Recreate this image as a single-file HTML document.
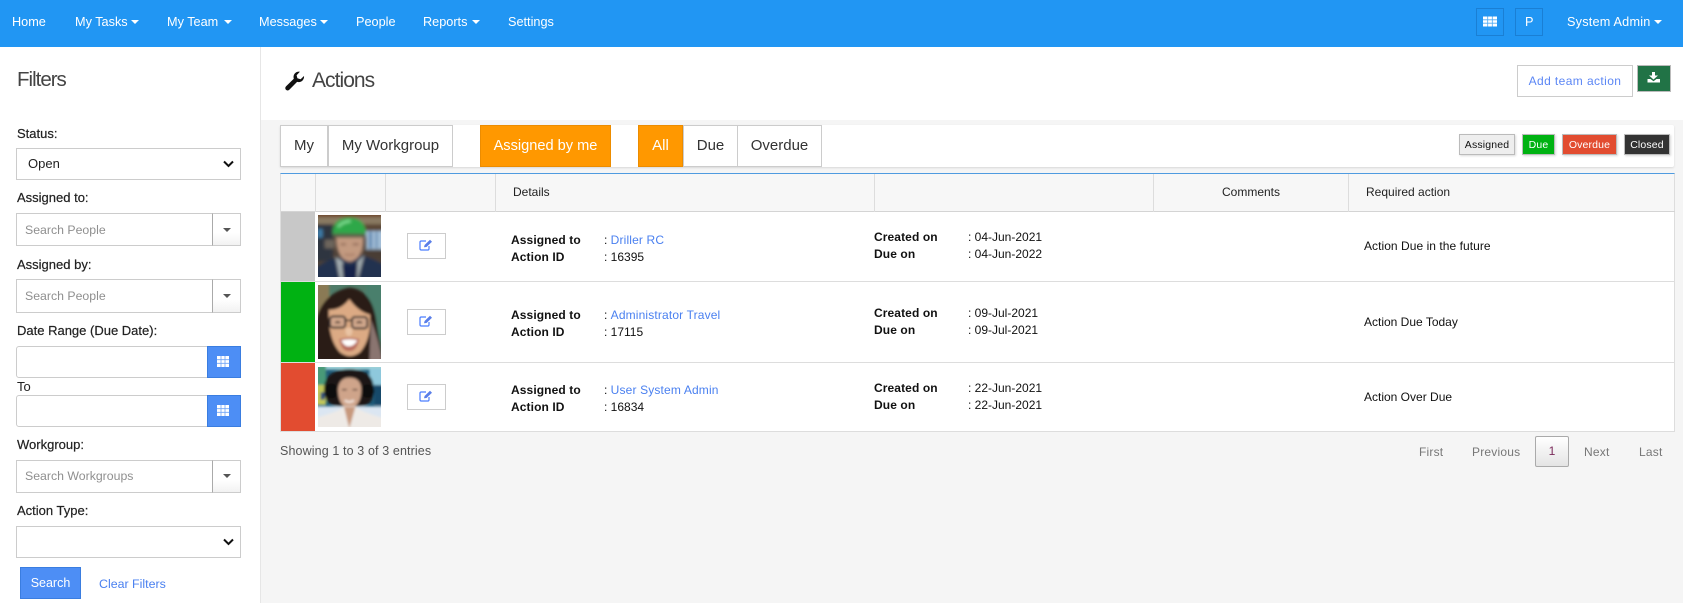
<!DOCTYPE html>
<html><head><meta charset="utf-8"><title>Actions</title>
<style>
*{box-sizing:border-box}
html,body{margin:0;padding:0;width:1683px;height:603px;overflow:hidden;background:#f5f5f5;font-family:"Liberation Sans",sans-serif;color:#222}
.a{position:absolute}
.t{position:absolute;white-space:nowrap;line-height:20px;height:20px}
.nav{font-size:12.7px;color:#fff}
.car{position:absolute;width:0;height:0;border-left:4px solid transparent;border-right:4px solid transparent;border-top:4px solid #fff}
.lab{font-size:13px;color:#222;-webkit-text-stroke:.2px #222;left:17px}
.box{position:absolute;left:16px;width:225px;background:#fff;border:1px solid #ccc}
.ph{font-size:12.3px;color:#8f8f8f;left:25px}
.split{position:absolute;left:212px;width:29px;background:linear-gradient(#fff 60%,#f2f2f2);border:1px solid #ccc;border-left:1px solid #aaa}
.dcar{position:absolute;left:223px;width:0;height:0;border-left:4px solid transparent;border-right:4px solid transparent;border-top:4px solid #555}
.tab{position:absolute;top:125px;height:42px;background:#fff;border:1px solid #ccc;font-size:15px;color:#333;text-align:center;line-height:40px}
.or{background:#ff9800;border:1px solid #ec8c00;color:#fff}
.leg{position:absolute;top:134px;height:21px;font-size:10.5px;text-align:center;line-height:20px;border:1px solid #bbb;box-shadow:1px 1px 2px rgba(0,0,0,.15);color:#fff;letter-spacing:.15px}
.hd{font-size:12px;color:#222}
.sep{position:absolute;top:174px;height:38px;width:1px;background:#ddd}
.rowline{position:absolute;left:281px;width:1394px;height:1px;background:#ddd}
.bt{font-size:12px;font-weight:bold;color:#111;letter-spacing:.1px}
.v{font-size:12px;color:#111}
.lnk{color:#4a80f0;letter-spacing:.15px}
.ed{position:absolute;left:407px;width:39px;height:26px;border:1px solid #ccc;background:#fff}
.pg{font-size:12px;color:#777;letter-spacing:.2px}
</style></head><body>

<div class="a" style="left:0;top:0;width:1683px;height:47px;background:#2196f3"></div>
<div class="t nav" style="left:12px;top:12px">Home</div>
<div class="t nav" style="left:75px;top:12px">My Tasks</div><div class="car" style="left:131px;top:20px"></div>
<div class="t nav" style="left:167px;top:12px">My Team</div><div class="car" style="left:224px;top:20px"></div>
<div class="t nav" style="left:259px;top:12px">Messages</div><div class="car" style="left:320px;top:20px"></div>
<div class="t nav" style="left:356px;top:12px">People</div>
<div class="t nav" style="left:423px;top:12px">Reports</div><div class="car" style="left:472px;top:20px"></div>
<div class="t nav" style="left:508px;top:12px">Settings</div>

<div class="a" style="left:1476px;top:8px;width:28px;height:28px;border:1px solid #1a7fd4"></div>
<svg class="a" style="left:1483px;top:16px" width="14" height="11" viewBox="0 0 14 11"><rect width="14" height="10" y=".5" fill="#fff"/><path d="M4.700 0V11M9.300 0V11M0 3.800H14M0 7.200H14" stroke="#2196f3" stroke-width=".8" opacity=".8"/></svg>
<div class="a" style="left:1515px;top:8px;width:28px;height:28px;border:1px solid #1a7fd4"></div>
<div class="t nav" style="left:1525px;top:12px">P</div>
<div class="t nav" style="left:1567px;top:12px;letter-spacing:.2px">System Admin</div><div class="car" style="left:1654px;top:20px"></div>

<div class="a" style="left:0;top:47px;width:260px;height:556px;background:#fff"></div>
<div class="a" style="left:260px;top:47px;width:1px;height:556px;background:#e6e6e6"></div>
<div class="a" style="left:261px;top:47px;width:1422px;height:73px;background:#fff"></div>

<div class="t" style="left:17px;top:66px;height:28px;line-height:28px;font-size:20.5px;color:#444;letter-spacing:-1px">Filters</div>

<div class="t lab" style="top:124px">Status:</div>
<div class="box" style="top:148px;height:32px"></div>
<div class="t" style="left:28px;top:154px;font-size:13px;color:#222">Open</div>
<svg class="a" style="left:223px;top:160px" width="11" height="8"><path d="M1 1.500l4.500 4.500 4.500-4.500" fill="none" stroke="#111" stroke-width="2"/></svg>

<div class="t lab" style="top:188px">Assigned to:</div>
<div class="box" style="top:213px;height:33px;width:197px"></div>
<div class="split" style="top:213px;height:33px"></div><div class="dcar" style="top:228px"></div>
<div class="t ph" style="top:220px">Search People</div>

<div class="t lab" style="top:255px">Assigned by:</div>
<div class="box" style="top:279px;height:34px;width:197px"></div>
<div class="split" style="top:279px;height:34px"></div><div class="dcar" style="top:294px"></div>
<div class="t ph" style="top:286px">Search People</div>

<div class="t lab" style="top:321px">Date Range (Due Date):</div>
<div class="box" style="top:346px;height:32px;width:192px;border-radius:3px 0 0 3px"></div>
<div class="a" style="left:207px;top:346px;width:34px;height:32px;background:#4d8ef5;border:1px solid #3a7de0"></div>
<svg class="a" style="left:217px;top:356px" width="12" height="11" viewBox="0 0 12 11"><rect width="12" height="11" fill="#fff"/><path d="M4 0V11M8 0V11M0 3.700H12M0 7.300H12" stroke="#4d8ef5" stroke-width=".8" opacity=".8"/></svg>
<div class="t" style="left:17px;top:377px;font-size:13px;color:#222">To</div>
<div class="box" style="top:395px;height:32px;width:192px;border-radius:3px 0 0 3px"></div>
<div class="a" style="left:207px;top:395px;width:34px;height:32px;background:#4d8ef5;border:1px solid #3a7de0"></div>
<svg class="a" style="left:217px;top:405px" width="12" height="11" viewBox="0 0 12 11"><rect width="12" height="11" fill="#fff"/><path d="M4 0V11M8 0V11M0 3.700H12M0 7.300H12" stroke="#4d8ef5" stroke-width=".8" opacity=".8"/></svg>

<div class="t lab" style="top:435px">Workgroup:</div>
<div class="box" style="top:460px;height:33px;width:197px"></div>
<div class="split" style="top:460px;height:33px"></div><div class="dcar" style="top:474px"></div>
<div class="t ph" style="top:466px">Search Workgroups</div>

<div class="t lab" style="top:501px">Action Type:</div>
<div class="box" style="top:526px;height:32px"></div>
<svg class="a" style="left:223px;top:538px" width="11" height="8"><path d="M1 1.500l4.500 4.500 4.500-4.500" fill="none" stroke="#111" stroke-width="2"/></svg>

<div class="a" style="left:20px;top:567px;width:61px;height:32px;background:#4d8ef5;border:1px solid #3a7de0;color:#fff;font-size:12.500px;text-align:center;line-height:30px">Search</div>
<div class="t" style="left:99px;top:574px;font-size:12.4px;color:#4a80f0">Clear Filters</div>

<svg class="a" style="left:285px;top:71px" width="20" height="20" viewBox="0 0 20 20"><path d="M14 .6a5.400 5.400 0 0 0-5.200 7.100L1 15.400a2.300 2.300 0 0 0 3.300 3.400l7.800-7.900A5.400 5.400 0 0 0 19 5l-3.400 3.200-3.200-.9-.8-3.100L14.900.7z" fill="#111"/></svg>
<div class="t" style="left:312px;top:67px;height:28px;line-height:28px;font-size:21px;color:#444;letter-spacing:-.95px">Actions</div>

<div class="a" style="left:1517px;top:65px;width:116px;height:32px;border:1px solid #ccc;background:#fff;color:#5b86f5;font-size:12px;letter-spacing:.4px;text-align:center;line-height:30px">Add team action</div>
<div class="a" style="left:1637px;top:65px;width:34px;height:27px;background:#217346;border:1px solid #bbb"></div>
<svg class="a" style="left:1647px;top:72px" width="14" height="11" viewBox="0 0 14 11"><path d="M5 0h3v3.500h3L6.500 7.500 2 3.500h3zM.5 7h3l3 2.200L9.500 7h3.500v3.500H.5z" fill="#fff"/></svg>

<div class="a" style="left:280px;top:125px;width:1394px;height:42px;background:#fff;box-shadow:0 1px 2px rgba(0,0,0,.12);border-radius:2px"></div>
<div class="tab" style="left:280px;width:48px">My</div>
<div class="tab" style="left:328px;width:125px">My Workgroup</div>
<div class="tab or" style="left:480px;width:131px;font-size:14.6px">Assigned by me</div>
<div class="tab or" style="left:638px;width:45px">All</div>
<div class="tab" style="left:683px;width:55px">Due</div>
<div class="tab" style="left:737px;width:85px">Overdue</div>

<div class="leg" style="left:1459px;width:56px;background:#eee;color:#111">Assigned</div>
<div class="leg" style="left:1522px;width:33px;background:#00b212">Due</div>
<div class="leg" style="left:1562px;width:55px;background:#e24c30">Overdue</div>
<div class="leg" style="left:1624px;width:46px;background:#333">Closed</div>

<div class="a" style="left:280px;top:173px;width:1395px;height:259px;background:#fff;border:1px solid #ddd;border-top:1px solid #4f9be0"></div>
<div class="a" style="left:281px;top:174px;width:1393px;height:37px;background:#f7f7f7"></div>
<div class="rowline" style="top:211px;background:#d4d4d4"></div>
<div class="sep" style="left:315px"></div><div class="sep" style="left:385px"></div><div class="sep" style="left:495px"></div><div class="sep" style="left:874px"></div><div class="sep" style="left:1153px"></div><div class="sep" style="left:1348px"></div>
<div class="t hd" style="left:513px;top:182px">Details</div>
<div class="t hd" style="left:1222px;top:182px">Comments</div>
<div class="t hd" style="left:1366px;top:182px">Required action</div>

<div class="a" style="left:281px;top:212px;width:34px;height:69px;background:#c8c8c8"></div>
<div class="a" style="left:281px;top:282px;width:34px;height:80px;background:#00b212"></div>
<div class="a" style="left:281px;top:363px;width:34px;height:68px;background:#e24c30"></div>
<div class="rowline" style="top:281px"></div>
<div class="rowline" style="top:362px"></div>

<!-- Face 1 -->
<svg class="a" style="left:318px;top:215px" width="63" height="62" viewBox="6 6 189 186">
<defs><filter id="b1" x="-20%" y="-20%" width="140%" height="140%"><feGaussianBlur stdDeviation="4.500"/></filter></defs>
<rect x="6" y="6" width="189" height="186" fill="#4e4138"/>
<g filter="url(#b1)">
<rect x="-10" y="-10" width="224" height="22" fill="#6e4426"/>
<rect x="-10" y="12" width="224" height="22" fill="#8a7a62"/>
<rect x="-10" y="34" width="60" height="110" fill="#2e3440"/>
<rect x="4" y="48" width="16" height="26" fill="#3c7ca8"/>
<rect x="140" y="34" width="70" height="20" fill="#5a4634"/>
<rect x="150" y="54" width="55" height="55" fill="#a5c0d8"/>
<rect x="160" y="56" width="7" height="50" fill="#3a6ea0"/>
<rect x="178" y="56" width="7" height="50" fill="#6b8fb5"/>
<rect x="140" y="110" width="70" height="30" fill="#4a3e36"/>
<rect x="26" y="80" width="30" height="26" fill="#6d655c"/>
<path d="M-5 200V168Q25 145 62 134L140 128Q178 138 205 158V200Z" fill="#22314f"/>
<path d="M58 130L72 200H92L80 146ZM145 126L125 200H110L125 146Z" fill="#a4adb0"/>
<path d="M78 152Q100 166 125 150L122 200H82Z" fill="#13234a"/>
<path d="M60 72H142Q146 135 102 146Q60 140 60 72Z" fill="#c39a80"/>
<path d="M74 94H90M110 94H128" stroke="#6a4638" stroke-width="4"/>
<path d="M86 124Q100 128 116 124" stroke="#8a5a4c" stroke-width="3" fill="none"/>
<path d="M50 66Q48 14 100 14Q150 14 150 66Z" fill="#2ea84a"/>
<path d="M66 42Q78 26 104 24" stroke="#7ddb8f" stroke-width="8" fill="none"/>
<path d="M52 62H148V74H52Z" fill="#565f48"/>
</g></svg>

<!-- Face 2 -->
<svg class="a" style="left:318px;top:285px" width="63" height="74" viewBox="6 6 189 222">
<defs><filter id="b2" x="-20%" y="-20%" width="140%" height="140%"><feGaussianBlur stdDeviation="4"/></filter></defs>
<rect x="6" y="6" width="189" height="222" fill="#4f7b68"/>
<g filter="url(#b2)">
<rect x="-10" y="-10" width="50" height="120" fill="#8a7a55"/>
<rect x="150" y="-10" width="60" height="180" fill="#4a7f6c"/>
<path d="M-5 240V130Q14 30 100 14Q170 20 182 120Q190 180 205 240Z" fill="#2a1b16"/>
<path d="M165 110Q188 170 200 240H160Z" fill="#8a7570"/>
<path d="M38 80Q75 82 100 48Q125 85 162 95Q166 170 132 208Q102 230 72 208Q36 170 38 80Z" fill="#dcaa84"/>
<rect x="42" y="100" width="46" height="34" rx="9" fill="#d2a88c" stroke="#2f2a2a" stroke-width="6"/>
<rect x="108" y="102" width="46" height="34" rx="9" fill="#d2a88c" stroke="#2f2a2a" stroke-width="6"/>
<path d="M88 112H108" stroke="#2f2a2a" stroke-width="5"/>
<path d="M58 120Q65 114 72 120M122 120Q130 114 138 120" stroke="#2a1b16" stroke-width="5" fill="none"/>
<path d="M70 168Q100 160 130 168Q122 206 98 204Q76 204 70 168Z" fill="#b86a5c"/>
<path d="M76 172Q100 166 124 172Q114 190 98 190Q84 190 76 172Z" fill="#fff"/>
<path d="M90 135Q84 155 100 160Q112 155 108 135Z" fill="#eac4a4"/>
</g></svg>

<!-- Face 3 -->
<svg class="a" style="left:318px;top:367px" width="63" height="60" viewBox="6 6 189 180">
<defs><filter id="b3" x="-20%" y="-20%" width="140%" height="140%"><feGaussianBlur stdDeviation="4"/></filter></defs>
<rect x="6" y="6" width="189" height="180" fill="#1f5a78"/>
<g filter="url(#b3)">
<rect x="-10" y="-10" width="224" height="24" fill="#9fd2d8"/>
<rect x="-10" y="0" width="40" height="70" fill="#4a9a78"/>
<rect x="-10" y="60" width="40" height="60" fill="#c2c85a"/>
<rect x="14" y="82" width="12" height="22" fill="#2a4e7a"/>
<rect x="160" y="10" width="50" height="50" fill="#8ec8dc"/>
<rect x="175" y="60" width="35" height="60" fill="#19486a"/>
<rect x="-10" y="124" width="224" height="80" fill="#dbe6f2"/>
<path d="M24 80Q20 14 100 12Q182 14 172 85Q170 122 130 124H70Q28 122 24 80Z" fill="#1a1613"/>
<circle cx="46" cy="78" r="22" fill="#0f0f0f"/><circle cx="155" cy="78" r="20" fill="#0f0f0f"/>
<path d="M66 72Q70 38 100 38Q134 38 136 72Q136 122 100 134Q66 122 66 72Z" fill="#cfa48a"/>
<path d="M78 74H92M110 74H124" stroke="#4a3228" stroke-width="4"/>
<path d="M86 106Q100 116 114 106" stroke="#f5e9e2" stroke-width="6" fill="none"/>
<path d="M-5 200V160Q40 148 72 134L82 124H118L130 134Q165 150 205 160V200Z" fill="#eeeae6"/>
<path d="M84 126L100 190L118 126Z" fill="#c7987c"/>
</g></svg>

<div class="ed" style="top:233px"></div><div class="ed" style="top:309px"></div><div class="ed" style="top:384px"></div>
<svg class="a" style="left:419px;top:239px" width="14" height="12" viewBox="0 0 14 12"><path d="M7 2H2.200Q1 2 1 3.200V9.800Q1 11 2.200 11H9Q10 11 10 9.800V7" fill="none" stroke="#4a7dff" stroke-width="1.200"/><path d="M5 8.200L5.600 6 11 .8 13 2.800 7.500 8z" fill="#5a7ee8"/></svg>
<svg class="a" style="left:419px;top:315px" width="14" height="12" viewBox="0 0 14 12"><path d="M7 2H2.200Q1 2 1 3.200V9.800Q1 11 2.200 11H9Q10 11 10 9.800V7" fill="none" stroke="#4a7dff" stroke-width="1.200"/><path d="M5 8.200L5.600 6 11 .8 13 2.800 7.500 8z" fill="#5a7ee8"/></svg>
<svg class="a" style="left:419px;top:390px" width="14" height="12" viewBox="0 0 14 12"><path d="M7 2H2.200Q1 2 1 3.200V9.800Q1 11 2.200 11H9Q10 11 10 9.800V7" fill="none" stroke="#4a7dff" stroke-width="1.200"/><path d="M5 8.200L5.600 6 11 .8 13 2.800 7.500 8z" fill="#5a7ee8"/></svg>

<div class="t bt" style="left:511px;top:230px">Assigned to</div><div class="t v" style="left:604px;top:230px">: <span class="lnk">Driller RC</span></div>
<div class="t bt" style="left:511px;top:247px">Action ID</div><div class="t v" style="left:604px;top:247px">: 16395</div>
<div class="t bt" style="left:511px;top:305px">Assigned to</div><div class="t v" style="left:604px;top:305px">: <span class="lnk">Administrator Travel</span></div>
<div class="t bt" style="left:511px;top:322px">Action ID</div><div class="t v" style="left:604px;top:322px">: 17115</div>
<div class="t bt" style="left:511px;top:380px">Assigned to</div><div class="t v" style="left:604px;top:380px">: <span class="lnk">User System Admin</span></div>
<div class="t bt" style="left:511px;top:397px">Action ID</div><div class="t v" style="left:604px;top:397px">: 16834</div>

<div class="t bt" style="left:874px;top:227px">Created on</div><div class="t v" style="left:968px;top:227px">: 04-Jun-2021</div>
<div class="t bt" style="left:874px;top:244px">Due on</div><div class="t v" style="left:968px;top:244px">: 04-Jun-2022</div>
<div class="t bt" style="left:874px;top:303px">Created on</div><div class="t v" style="left:968px;top:303px">: 09-Jul-2021</div>
<div class="t bt" style="left:874px;top:320px">Due on</div><div class="t v" style="left:968px;top:320px">: 09-Jul-2021</div>
<div class="t bt" style="left:874px;top:378px">Created on</div><div class="t v" style="left:968px;top:378px">: 22-Jun-2021</div>
<div class="t bt" style="left:874px;top:395px">Due on</div><div class="t v" style="left:968px;top:395px">: 22-Jun-2021</div>

<div class="t v" style="left:1364px;top:236px;letter-spacing:.05px">Action Due in the future</div>
<div class="t v" style="left:1364px;top:312px">Action Due Today</div>
<div class="t v" style="left:1364px;top:387px">Action Over Due</div>

<div class="t" style="left:280px;top:441px;font-size:12.500px;color:#555;letter-spacing:.12px">Showing 1 to 3 of 3 entries</div>
<div class="t pg" style="left:1419px;top:442px">First</div>
<div class="t pg" style="left:1472px;top:442px">Previous</div>
<div class="a" style="left:1535px;top:436px;width:34px;height:31px;background:linear-gradient(#fff,#e4e4e4);border:1px solid #aaa;border-radius:2px;font-size:12px;color:#7a2a5a;text-align:center;line-height:29px">1</div>
<div class="t pg" style="left:1584px;top:442px">Next</div>
<div class="t pg" style="left:1639px;top:442px">Last</div>

</body></html>
